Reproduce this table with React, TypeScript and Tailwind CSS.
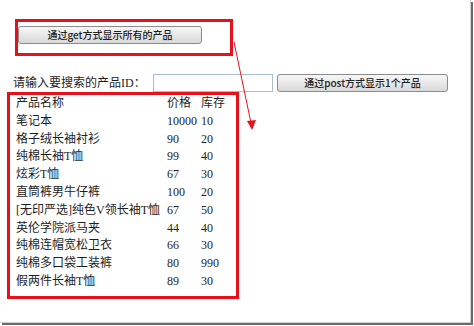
import React from 'react';

const products = [
  { name: '笔记本', price: '10000', stock: '10' },
  { name: '格子绒长袖衬衫', price: '90', stock: '20' },
  { name: '纯棉长袖T恤', price: '99', stock: '40' },
  { name: '炫彩T恤', price: '67', stock: '30' },
  { name: '直筒裤男牛仔裤', price: '100', stock: '20' },
  { name: '[无印严选]纯色V领长袖T恤', price: '67', stock: '50' },
  { name: '英伦学院派马夹', price: '44', stock: '40' },
  { name: '纯棉连帽宽松卫衣', price: '66', stock: '30' },
  { name: '纯棉多口袋工装裤', price: '80', stock: '990' },
  { name: '假两件长袖T恤', price: '89', stock: '30' },
];

function GrayButton({ label, className }: { label: string; className: string }) {
  return (
    <button
      className={`h-[18px] rounded-[3px] border border-[#8c8c8c] bg-gradient-to-b from-[#f7f7f7] to-[#d9d9d9] text-[10px] leading-none font-medium text-[#222] font-['Noto_Sans_CJK_SC',sans-serif] ${className}`}
    >
      {label}
    </button>
  );
}

export default function App() {
  return (
    <div className="w-[474px] h-[326px] bg-white relative overflow-hidden">
      <div className="w-[471px] h-[323px] border-r border-b border-[#cfcfcf] shadow-[2px_2px_0_#6b6b6b] bg-white font-['Liberation_Serif','Noto_Sans_CJK_SC',serif] text-[#1e1e1e]">
        {/* Get button area */}
        <div className="pt-[19px] pl-[15px]">
          <div className="w-[218px] h-[37px] border-[3px] border-[#e8111b]">
            <GrayButton label="通过get方式显示所有的产品" className="w-[184px] mt-[2px]" />
          </div>
        </div>

        {/* Search row */}
        <div className="flex items-center pl-[13px] mt-[17px] h-[19px]">
          <span className="text-[12px] leading-none w-[140px] whitespace-nowrap">请输入要搜索的产品ID：</span>
          <input
            className="w-[120px] h-[18px] border border-[#a9bdd1] bg-white outline-none mt-[1px]"
            type="text"
          />
          <GrayButton label="通过post方式显示1个产品" className="w-[171px] ml-[4px]" />
        </div>

        {/* Product table */}
        <div className="ml-[7px] w-[232px] h-[207px] border-[3px] border-[#e8111b] pl-[6px]">
          <div className="grid grid-cols-[151px_34px_1fr] text-[12px] leading-[17.8px]">
            <span>产品名称</span>
            <span>价格</span>
            <span>库存</span>
            {products.map((p) => (
              <React.Fragment key={p.name}>
                <span className="whitespace-nowrap">{p.name}</span>
                <span>{p.price}</span>
                <span>{p.stock}</span>
              </React.Fragment>
            ))}
          </div>
        </div>
      </div>

      {/* Annotation arrow */}
      <svg className="absolute left-0 top-0 pointer-events-none" width="474" height="326">
        <line x1="234" y1="42" x2="251" y2="123" stroke="#e8111b" strokeWidth="1" />
        <polygon points="247,121 256,120 252,130" fill="#e8111b" />
      </svg>
    </div>
  );
}
